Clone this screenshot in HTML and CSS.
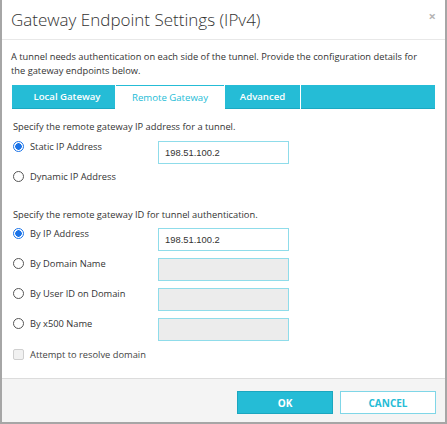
FILE: index.html
```html
<!DOCTYPE html>
<html lang="en">
<head>
    <meta charset="UTF-8">
    <title>Gateway Endpoint Settings (IPv4)</title>
    <link rel="stylesheet" href="styles.css">
</head>
<body>
    <div class="dialog">
        <div class="dialog-header">
            <div class="dialog-title">Gateway Endpoint Settings (IPv4)</div>
            <div class="dialog-close">&times;</div>
        </div>
        <div class="dialog-body">
            <p class="intro">A tunnel needs authentication on each side of the tunnel. Provide the configuration details for the gateway endpoints below.</p>
            <div class="tabs">
                <div class="tab tab-local">Local Gateway</div>
                <div class="tab tab-remote active">Remote Gateway</div>
                <div class="tab tab-advanced">Advanced</div>
                <div class="tab tab-filler"></div>
            </div>

            <div class="section-label">Specify the remote gateway IP address for a tunnel.</div>
            <div class="row">
                <label class="option"><span class="radio checked"></span>Static IP Address</label>
                <div class="field">198.51.100.2</div>
            </div>
            <div class="row">
                <label class="option"><span class="radio"></span>Dynamic IP Address</label>
            </div>

            <div class="section-label second">Specify the remote gateway ID for tunnel authentication.</div>
            <div class="row">
                <label class="option"><span class="radio checked"></span>By IP Address</label>
                <div class="field">198.51.100.2</div>
            </div>
            <div class="row">
                <label class="option"><span class="radio"></span>By Domain Name</label>
                <div class="field disabled"></div>
            </div>
            <div class="row">
                <label class="option"><span class="radio"></span>By User ID on Domain</label>
                <div class="field disabled"></div>
            </div>
            <div class="row">
                <label class="option"><span class="radio"></span>By x500 Name</label>
                <div class="field disabled"></div>
            </div>
            <div class="check-row">
                <label class="option muted"><span class="checkbox"></span>Attempt to resolve domain</label>
            </div>
        </div>
        <div class="dialog-footer">
            <button class="btn btn-ok">OK</button>
            <button class="btn btn-cancel">CANCEL</button>
        </div>
    </div>
</body>
</html>
```

FILE: styles.css
```css
body {
    margin: 0;
    padding: 0;
    background: #ffffff;
    font-family: 'Open Sans', 'Liberation Sans', sans-serif;
    color: #333;
}

.dialog {
    width: 447px;
    height: 424px;
    box-sizing: border-box;
    border-left: 2px solid #a6a6a6;
    border-right: 2px solid #a6a6a6;
    border-bottom: 2px solid #a6a6a6;
    display: flex;
    flex-direction: column;
    background: #fff;
}

.dialog-header {
    height: 39px;
    border-bottom: 1px solid #e8e8e8;
    display: flex;
    align-items: center;
    justify-content: space-between;
    padding: 0 9px 0 9px;
}

.dialog-title {
    font-size: 17px;
    font-weight: 300;
    color: #333;
    margin-top: -1px;
}

.dialog-close {
    font-size: 13px;
    color: #b5b5b5;
    font-weight: bold;
    margin-top: -8px;
    margin-right: 0;
}

.dialog-body {
    flex: 1;
    padding: 10px 10px 0 9px;
}

.intro {
    margin: 0;
    max-width: 421px;
    font-size: 9.3px;
    line-height: 14px;
}

.tabs {
    display: flex;
    margin-top: 7px;
    margin-left: 1px;
    height: 24px;
}

.tab {
    box-sizing: border-box;
    height: 24px;
    background: #25bcd6;
    border-bottom: 1px solid #1aa9c2;
    color: #fff;
    font-size: 9.6px;
    font-weight: 600;
    display: flex;
    align-items: center;
    justify-content: center;
    margin-right: 1px;
}

.tab-local {
    width: 103px;
    padding-left: 7px;
}

.tab-remote {
    width: 108px;
}

.tab-advanced {
    width: 75px;
}

.tab-filler {
    width: 134px;
    margin-right: 0;
}

.tab.active {
    background: #fff;
    color: #25bcd6;
    font-weight: normal;
    border-top: 1px solid #25bcd6;
    border-bottom: 1px solid #fff;
}

.section-label {
    font-size: 9.3px;
    line-height: 14px;
    margin-top: 11px;
    margin-bottom: 7px;
    margin-left: 2px;
}

.section-label.second {
    margin-top: 14px;
    margin-bottom: 6px;
}

.row {
    display: grid;
    grid-template-columns: 145px 131px;
    height: 23px;
    margin-bottom: 7px;
    margin-left: 2px;
}

.check-row {
    margin-left: 2px;
    padding-top: 1px;
}

.option {
    display: flex;
    align-items: center;
    font-size: 9.3px;
    line-height: 11px;
    height: 11px;
    white-space: nowrap;
}

.option.muted {
    color: #444;
}

.radio {
    width: 9px;
    height: 9px;
    border: 1px solid #555;
    border-radius: 50%;
    margin-right: 6px;
    box-sizing: content-box;
    flex-shrink: 0;
}

.radio.checked {
    border-color: #1a73e8;
    background: radial-gradient(circle, #1a73e8 0 3px, #fff 3.5px);
}

.checkbox {
    width: 9px;
    height: 9px;
    border: 1px solid #cfcfcf;
    background: #f1f1f1;
    border-radius: 2px;
    margin-right: 6px;
    flex-shrink: 0;
}

.field {
    box-sizing: border-box;
    height: 23px;
    border: 1px solid #8fdcea;
    background: #fff;
    font-family: 'Liberation Sans', Arial, sans-serif;
    font-size: 9.4px;
    color: #333;
    padding: 0 6px;
    display: flex;
    align-items: center;
}

.field.disabled {
    background: #ececec;
}

.dialog-footer {
    height: 44px;
    box-sizing: border-box;
    border-top: 1px solid #dcdcdc;
    background: #f4f4f4;
    display: flex;
    justify-content: flex-end;
    align-items: flex-start;
    padding: 12px 9px 0 0;
    gap: 7px;
}

.btn {
    width: 96px;
    height: 23px;
    box-sizing: border-box;
    font-family: 'Open Sans', 'Liberation Sans', sans-serif;
    font-size: 10px;
    font-weight: bold;
    cursor: pointer;
}

.btn-ok {
    background: #25bcd6;
    border: 1px solid #1ba6bf;
    color: #fff;
}

.btn-cancel {
    background: #fff;
    border: 1px solid #7fd6e7;
    color: #25bcd6;
}
```
